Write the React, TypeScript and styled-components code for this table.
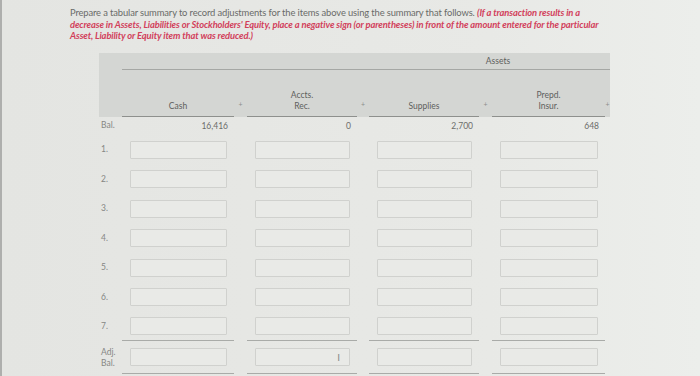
import React from "react";
import styled, { createGlobalStyle } from "styled-components";

const GlobalStyle = createGlobalStyle`
  html, body {
    margin: 0;
    padding: 0;
    background: #e7e8e5;
  }
  body {
    font-family: Lato, "Open Sans", sans-serif;
  }
`;

const Page = styled.div`
  width: 700px;
  height: 376px;
  box-sizing: border-box;
  overflow: hidden;
  border-left: 2px solid #aeafad;
  background: linear-gradient(90deg, #e4e5e2 0%, #e8e9e6 70%, #eceeeb 100%);
  padding: 7px 0 0 68px;
`;

const Prompt = styled.div`
  width: 530px;
  font-size: 9.4px;
  line-height: 11.6px;
  color: #6a6b69;
  letter-spacing: -0.12px;
`;

const Warn = styled.em`
  color: #d23f5b;
  font-weight: 700;
`;

const Table = styled.div`
  margin: 11px 0 0 29px;
  width: 511px;
`;

const cols = "23px 112px 13px 110px 12px 110px 13px 113px 5px";

const Band = styled.div`
  background: #d4d6d3;
  height: 64px;
  display: grid;
  grid-template-columns: ${cols};
  grid-template-rows: 17px 47px;
`;

const GroupTitle = styled.div`
  grid-column: 2 / -1;
  border-bottom: 1px solid #a5a7a4;
  font-size: 8.5px;
  color: #5e605d;
  display: flex;
  align-items: center;
  justify-content: center;
  padding-left: 264px;
`;

const ColHead = styled.div`
  border-bottom: 1px solid #8e908d;
  display: flex;
  align-items: flex-end;
  justify-content: center;
  text-align: center;
  font-size: 8.5px;
  line-height: 11px;
  color: #5e605d;
  padding-bottom: 4px;
`;

const Plus = styled.div<{ $dim?: boolean }>`
  display: flex;
  align-items: flex-end;
  justify-content: center;
  font-size: 7px;
  color: ${(p) => (p.$dim ? "#cfd0cd" : "#8d8f8c")};
  padding-bottom: 9px;
`;

const Row = styled.div<{ $h: number }>`
  display: grid;
  grid-template-columns: ${cols};
  height: ${(p) => p.$h}px;
  align-items: center;
`;

const Label = styled.div`
  font-size: 8.5px;
  line-height: 11px;
  color: #858784;
  padding-left: 2px;
`;

const Amount = styled.div`
  font-size: 8.5px;
  color: #6b6d6a;
  text-align: right;
  padding-right: 6px;
`;

const Cell = styled.div<{ $line?: boolean }>`
  height: 100%;
  display: flex;
  align-items: center;
  padding: 0 7px 0 8px;
  box-sizing: border-box;
  border-bottom: ${(p) => (p.$line ? "1px solid #a9aba8" : "none")};
`;

const Input = styled.div`
  width: 100%;
  height: 18px;
  box-sizing: border-box;
  border: 1px solid #d0d1ce;
  border-radius: 1px;
  background: #e9eae7;
  position: relative;
`;

const Cursor = styled.span`
  position: absolute;
  right: 9px;
  top: 3px;
  font-size: 10px;
  line-height: 10px;
  color: #8a8c89;
`;

const heads = [["Cash"], ["Accts.", "Rec."], ["Supplies"], ["Prepd.", "Insur."]];
const balances = ["16,416", "0", "2,700", "648"];
const steps = ["1.", "2.", "3.", "4.", "5.", "6.", "7."];

export default function App() {
  return (
    <>
      <GlobalStyle />
      <Page>
        <Prompt>
          Prepare a tabular summary to record adjustments for the items above using the summary that follows.{" "}
          <Warn>
            (If a transaction results in a decrease in Assets, Liabilities or Stockholders' Equity, place a negative
            sign (or parentheses) in front of the amount entered for the particular Asset, Liability or Equity item that
            was reduced.)
          </Warn>
        </Prompt>
        <Table>
          <Band>
            <div />
            <GroupTitle>Assets</GroupTitle>
            <div />
            {heads.map((h, i) => (
              <React.Fragment key={i}>
                <ColHead>
                  <div>
                    {h.map((t) => (
                      <div key={t}>{t}</div>
                    ))}
                  </div>
                </ColHead>
                <Plus>+</Plus>
              </React.Fragment>
            ))}
          </Band>
          <Row $h={18}>
            <Label>Bal.</Label>
            {balances.map((b, i) => (
              <React.Fragment key={i}>
                <Amount>{b}</Amount>
                <div />
              </React.Fragment>
            ))}
          </Row>
          {steps.map((s, r) => (
            <Row key={s} $h={29.5}>
              <Label>{s}</Label>
              {heads.map((_, i) => (
                <React.Fragment key={i}>
                  <Cell $line={r === steps.length - 1}>
                    <Input />
                  </Cell>
                  <Plus $dim />
                </React.Fragment>
              ))}
            </Row>
          ))}
          <Row $h={33}>
            <Label>
              Adj.
              <br />
              Bal.
            </Label>
            {heads.map((_, i) => (
              <React.Fragment key={i}>
                <Cell $line>
                  <Input>{i === 1 && <Cursor>I</Cursor>}</Input>
                </Cell>
                <div />
              </React.Fragment>
            ))}
          </Row>
        </Table>
      </Page>
    </>
  );
}
